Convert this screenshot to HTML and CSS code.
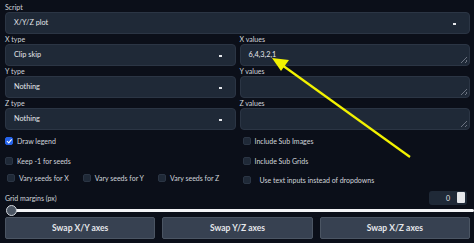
FILE: index.html
```html
<!DOCTYPE html>
<html lang="en">
  <head>
    <meta charset="UTF-8" />
    <title>X/Y/Z plot</title>
    <link rel="stylesheet" href="styles.css">
  </head>
  <body>
    <div class="panel">
      <div class="field">
        <span class="label">Script</span>
        <div class="select">X/Y/Z plot<span class="caret"></span></div>
      </div>

      <div class="row">
        <div class="field">
          <span class="label">X type</span>
          <div class="select">Clip skip<span class="caret"></span></div>
        </div>
        <div class="field">
          <span class="label">X values</span>
          <div class="textbox">6,4,3,2,1<span class="grip"></span></div>
        </div>
      </div>
      <div class="row">
        <div class="field">
          <span class="label">Y type</span>
          <div class="select">Nothing<span class="caret"></span></div>
        </div>
        <div class="field">
          <span class="label">Y values</span>
          <div class="textbox"><span class="grip"></span></div>
        </div>
      </div>
      <div class="row">
        <div class="field">
          <span class="label">Z type</span>
          <div class="select">Nothing<span class="caret"></span></div>
        </div>
        <div class="field">
          <span class="label">Z values</span>
          <div class="textbox"><span class="grip"></span></div>
        </div>
      </div>

      <div class="row checks">
        <div class="col">
          <label class="check"><span class="box on"></span>Draw legend</label>
          <label class="check"><span class="box"></span>Keep -1 for seeds</label>
          <div class="vary">
            <label class="check"><span class="box"></span>Vary seeds for X</label>
            <label class="check"><span class="box"></span>Vary seeds for Y</label>
            <label class="check"><span class="box"></span>Vary seeds for Z</label>
          </div>
        </div>
        <div class="col right">
          <label class="check"><span class="box"></span>Include Sub Images</label>
          <label class="check"><span class="box"></span>Include Sub Grids</label>
          <label class="check wide"><span class="box"></span>Use text inputs instead of dropdowns</label>
        </div>
      </div>

      <div class="slider-head">
        <span class="label">Grid margins (px)</span>
        <div class="number"><span>0</span><span class="spin"></span></div>
      </div>
      <div class="slider"><span class="thumb"></span></div>

      <div class="buttons">
        <button class="btn">Swap X/Y axes</button>
        <button class="btn">Swap Y/Z axes</button>
        <button class="btn">Swap X/Z axes</button>
      </div>
    </div>

    <!-- arrow drawn over the screenshot -->
    <svg class="arrow" width="474" height="243" viewBox="0 0 474 243">
      <line x1="410" y1="157" x2="282" y2="65" stroke="#f2f200" stroke-width="2.2" />
      <polygon points="272,58 289,60 281,71" fill="#f2f200" />
    </svg>
  </body>
</html>
```

FILE: styles.css
```css
body {
  margin: 0;
  background: #0b0f19;
  font-family: Lato, "Noto Sans", sans-serif;
  color: #e5e7eb;
  width: 474px;
  height: 243px;
  overflow: hidden;
  position: relative;
}

.panel {
  padding: 2px 4px 0 5px;
  display: flex;
  flex-direction: column;
}

.label {
  display: block;
  font-size: 7px;
  line-height: 10px;
  color: #d1d5db;
  height: 10px;
}

.field {
  display: flex;
  flex-direction: column;
  flex: 1 1 0;
  min-width: 0;
}

.row {
  display: flex;
  gap: 4px;
}

.select,
.textbox {
  position: relative;
  height: 22px;
  background: #1f2937;
  border: 1px solid #2b3544;
  border-radius: 4px;
  box-sizing: border-box;
  font-size: 7.3px;
  line-height: 20px;
  padding-left: 8px;
  color: #e5e7eb;
}

.caret {
  position: absolute;
  right: 13px;
  top: 10px;
  width: 3px;
  height: 2px;
  background: #e5e7eb;
}

.grip {
  position: absolute;
  right: 2px;
  bottom: 2px;
  width: 6px;
  height: 6px;
  background: linear-gradient(135deg, transparent 45%, #6b7280 45%, #6b7280 55%, transparent 55%, transparent 75%, #6b7280 75%, #6b7280 85%, transparent 85%);
}

.checks {
  margin-top: 1px;
}

.col {
  flex: 1 1 0;
  min-width: 0;
  display: flex;
  flex-direction: column;
}

.check {
  display: flex;
  align-items: center;
  gap: 4px;
  font-size: 7px;
  height: 20px;
  color: #d1d5db;
  white-space: nowrap;
}

.right .check {
  padding-left: 3px;
}

.right .wide {
  height: 18px;
  gap: 9px;
}

.box {
  width: 8px;
  height: 8px;
  border-radius: 2px;
  background: #1f2937;
  border: 1px solid #2b3544;
  box-sizing: border-box;
  flex: none;
}

.box.on {
  background: #2563eb;
  border-color: #2563eb;
  position: relative;
}

.box.on::after {
  content: "";
  position: absolute;
  left: 1.8px;
  top: 0;
  width: 1.6px;
  height: 3.6px;
  border: solid #fff;
  border-width: 0 1.3px 1.3px 0;
  transform: rotate(40deg);
}

.vary {
  display: flex;
  gap: 14px;
  padding-left: 2px;
}

.vary .check {
  height: 14px;
}

.slider-head {
  display: flex;
  justify-content: space-between;
  align-items: center;
  margin-top: 1px;
  height: 15px;
}

.number {
  display: flex;
  align-items: center;
  justify-content: flex-end;
  width: 38px;
  height: 14px;
  background: #1f2937;
  border-radius: 3px;
  font-size: 7px;
  margin-right: 3px;
  gap: 7px;
}

.spin {
  width: 8px;
  height: 11px;
  background: #e5e7eb;
  border-radius: 1px;
  margin-right: 2px;
}

.slider {
  position: relative;
  height: 3px;
  background: #f3f4f6;
  margin: 4px -4px 5px 4px;
  border-radius: 2px;
}

.thumb {
  position: absolute;
  left: -3px;
  top: -4px;
  width: 9px;
  height: 9px;
  border-radius: 50%;
  background: #4b5563;
  border: 1px solid #d1d5db;
}

.buttons {
  display: flex;
  gap: 7px;
}

.btn {
  flex: 1;
  height: 22px;
  background: #374151;
  border: 1px solid #4b5563;
  border-radius: 2px;
  color: #e5e7eb;
  font-family: Lato, "Noto Sans", sans-serif;
  font-weight: 700;
  font-size: 8.5px;
}

.arrow {
  position: absolute;
  left: 0;
  top: 0;
}
```
